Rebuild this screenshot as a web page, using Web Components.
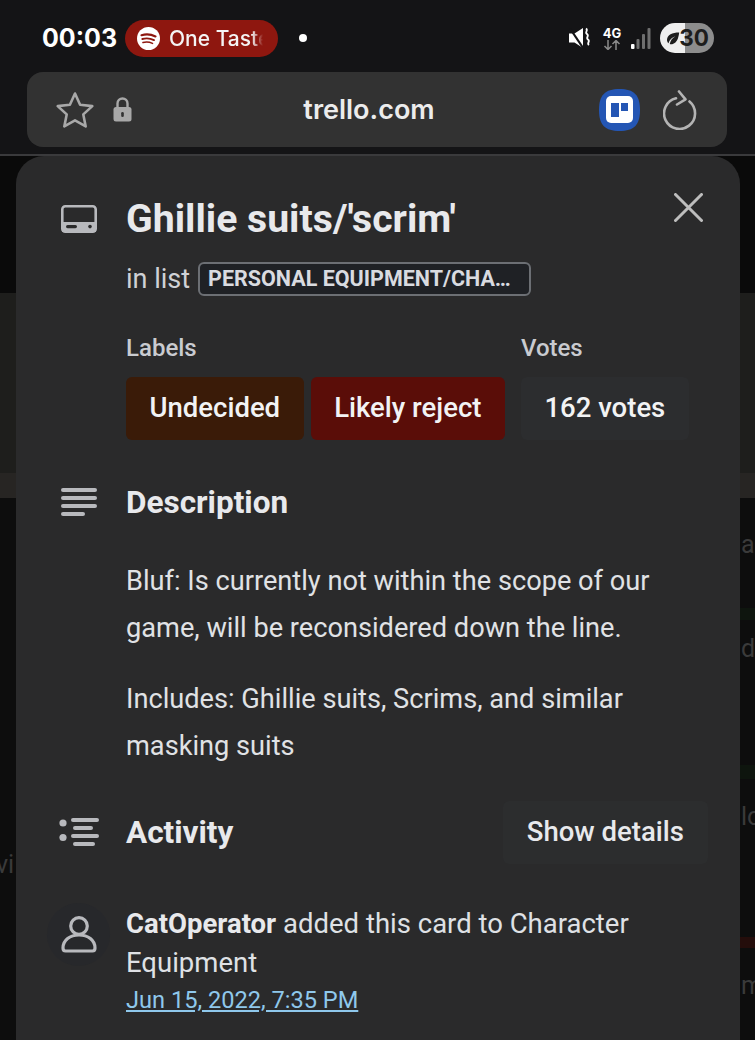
<!DOCTYPE html>
<html>
<head>
<meta charset="utf-8">
<title>Trello card</title>
<style>
    html, body { margin: 0; height: 100%; background: #0b0b0b; }
    body { width: 755px; height: 1040px; overflow: hidden; font-family: Roboto, "Liberation Sans", sans-serif; }
</style>
</head>
<body>
<phone-chrome></phone-chrome>
<page-backdrop>
    <card-modal></card-modal>
</page-backdrop>

<script>
class PhoneChrome extends HTMLElement {
    constructor() {
        super();
        this.attachShadow({ mode: 'open' });
        this.shadowRoot.innerHTML = `
            <style>
                :host { display: block; height: 156px; background: #141416; box-sizing: border-box; border-bottom: 2px solid #3a3a3c; font-family: Inter, Roboto, sans-serif; }
                .status { height: 72px; box-sizing: border-box; padding: 19px 41px 0 42px; display: flex; align-items: flex-start; }
                .time { color: #fff; font-size: 25px; font-weight: 700; line-height: 38px; width: 83px; }
                .pill { width: 153px; height: 37px; margin-top: 1px; background: #8e170f; border-radius: 19px; display: flex; align-items: center; box-sizing: border-box; padding-left: 12px; gap: 9px; color: #f4f4f4; font-size: 21px; font-weight: 500; overflow: hidden; }
                .pill span { width: 94px; overflow: hidden; white-space: nowrap; -webkit-mask-image: linear-gradient(90deg,#000 88%,transparent); mask-image: linear-gradient(90deg,#000 88%,transparent); }
                .dot { width: 8px; height: 8px; border-radius: 50%; background: #fff; margin: 15px 0 0 21px; }
                .right { margin-left: auto; display: flex; align-items: center; height: 38px; }
                .net { width: 20px; margin-left: 11px; color: #fff; font-size: 13px; font-weight: 700; line-height: 13px; text-align: center; }
                .net svg { display: block; margin: 0 auto; }
                .bars { margin-left: 9px; }
                .batt { margin-left: 9px; width: 54px; height: 30px; border-radius: 15px; background: linear-gradient(90deg, #efefef 0 47%, #8d8d8d 47%); position: relative; color: #1d1d1d; font-size: 22.500px; font-weight: 700; line-height: 30px; text-align: right; padding-right: 5px; box-sizing: border-box; }
                .batt svg { position: absolute; left: 5px; top: 8px; }
                .bar { margin: 0 28px 0 27px; height: 75px; background: #323232; border-radius: 16px; display: flex; align-items: center; box-sizing: border-box; padding: 0 30px 0 28px; position: relative; }
                .bar .url { position: absolute; left: 0; right: 16px; text-align: center; color: #ececec; font-size: 27px; font-weight: 600; }
                .lock { margin-left: 18px; }
                .end { margin-left: auto; display: flex; align-items: center; gap: 23px; position: relative; }
            </style>
            <div class="status">
                <div class="time">00:03</div>
                <div class="pill">
                    <svg width="23" height="23" viewBox="0 0 23 23"><circle cx="11.500" cy="11.500" r="11.500" fill="#fff"/><g fill="none" stroke="#8e170f" stroke-linecap="round"><path d="M4.500 8.200c4.600-1.300 9.600-.9 14 1.200" stroke-width="2.200"/><path d="M5.300 12c3.900-1 8-.7 11.700 1.100" stroke-width="1.900"/><path d="M6 15.500c3.200-.8 6.500-.5 9.500.9" stroke-width="1.600"/></g></svg>
                    <span>One Taste</span>
                </div>
                <div class="dot"></div>
                <div class="right">
                    <svg width="22" height="22" viewBox="0 0 22 22"><path d="M0 6.500h5.500L14 1v20l-8.500-5.500H0z" fill="#fff"/><path d="M1 1.500l13.500 20" stroke="#141416" stroke-width="2.200"/><path d="M17 1.500c2.800 2-1.800 3.600 1 5.500s-1.800 3.600 1 5.500-1.800 3.600 1 5.500" fill="none" stroke="#fff" stroke-width="1.800"/></svg>
                    <div class="net">4G
                        <svg width="18" height="10" viewBox="0 0 18 10"><path d="M5 0v9M1.500 6L5 9.500 8.500 6M13 10V1M9.500 4L13 .5 16.500 4" fill="none" stroke="#8a8a8a" stroke-width="1.500"/></svg>
                    </div>
                    <svg class="bars" width="20" height="21" viewBox="0 0 20 21"><rect x="0" y="16" width="3.500" height="5" rx="1" fill="#fff"/><rect x="5.500" y="11" width="3" height="10" rx="1" fill="#6e6e6e"/><rect x="11" y="6" width="3" height="15" rx="1" fill="#6e6e6e"/><rect x="16.500" y="0" width="3" height="21" rx="1" fill="#6e6e6e"/></svg>
                    <div class="batt">
                        <svg width="15" height="15" viewBox="0 0 19 19"><path d="M18 2C9 2 3 5 2.500 11c0 2 .8 3.500 2 4.500C6 10 10 8 13 7c-3.500 2-6 4.500-7 9.500 1 .5 2.500.5 4 0 5-1.500 7-7 8-14.500z" fill="#1d1d1d"/></svg>
                        30
                    </div>
                </div>
            </div>
            <div class="bar">
                <svg width="40" height="38" viewBox="0 0 40 38"><path d="M20 2.500l5.100 11.200 12.200 1.400-9 8.300 2.400 12-10.700-6-10.700 6 2.400-12-9-8.300 12.200-1.400z" fill="none" stroke="#a8a8a8" stroke-width="2.600" stroke-linejoin="round"/></svg>
                <svg class="lock" width="19" height="25" viewBox="0 0 19 25"><path d="M4.500 11V6.500a5 5 0 0 1 10 0V11" fill="none" stroke="#a8a8a8" stroke-width="2.400"/><rect x="0.500" y="10" width="18" height="14.500" rx="2.500" fill="#a8a8a8"/><rect x="8.200" y="15" width="2.600" height="5" rx="1.300" fill="#323232"/></svg>
                <div class="url">trello.com</div>
                <div class="end">
                    <svg width="41" height="42" viewBox="0 0 41 42"><path d="M20.500 0C35 0 41 6 41 21S35 42 20.500 42 0 36 0 21 6 0 20.500 0z" fill="#2456b4"/><rect x="7" y="7" width="27" height="27" rx="5" fill="#fff"/><rect x="12" y="14" width="8" height="14" fill="#2456b4"/><rect x="22" y="14" width="7" height="8" fill="#2456b4"/></svg>
                    <svg width="34" height="40" viewBox="0 0 34 40" fill="none" stroke="#b4b4b4" stroke-width="2.600" stroke-linecap="round" stroke-linejoin="round"><path d="M13 8.300A15.500 15.500 0 1 0 26.500 11.500"/><path d="M16 1.500l6.500 7.800-8.500 5.200"/></svg>
                </div>
            </div>
        `;
    }
}

// Dimmed Trello board behind the modal, only its edges show
class PageBackdrop extends HTMLElement {
    constructor() {
        super();
        this.attachShadow({ mode: 'open' });
        this.shadowRoot.innerHTML = `
            <style>
                :host { display: block; position: relative; height: 884px; overflow: hidden; padding: 0 15px 0 16px; background: linear-gradient(180deg, #0a0a0a 0 137px, #1e1e1c 137px 317px, #272523 317px 342px, #0d0d0d 342px); color: #3a3a3a; font-size: 25px; }
                span { position: absolute; }
                i { position: absolute; left: 740px; width: 15px; }
            </style>
            <i style="top:452px;height:12px;background:#0e150e"></i>
            <i style="top:609px;height:14px;background:#0e150e"></i>
            <i style="top:781px;height:11px;background:#240d0b"></i>
            <span style="left:-4px;top:694px">vi</span>
            <span style="left:741px;top:374px">a</span>
            <span style="left:741px;top:478px">d</span>
            <span style="left:741px;top:646px">lo</span>
            <span style="left:741px;top:815px">m</span>
            <slot></slot>
        `;
    }
}

class CardSection extends HTMLElement {
    static get observedAttributes() {
        return ['heading'];
    }

    constructor() {
        super();
        this.attachShadow({ mode: 'open' });
        this.shadowRoot.innerHTML = `
            <style>
                :host { display: grid; grid-template-columns: 110px 1fr; }
                .icon { display: flex; justify-content: flex-start; padding-left: 45px; align-items: center; height: 40px; }
                .head { display: flex; align-items: center; justify-content: space-between; height: 40px; color: #e8e9ec; font-size: var(--head-size, 31.500px); font-weight: 700; }
                .body { grid-column: 2; }
            </style>
            <div class="icon"><slot name="icon"></slot></div>
            <div class="head"><span id="heading"></span><slot name="action"></slot></div>
            <div class="body"><slot></slot></div>
        `;
    }

    attributeChangedCallback() {
        this.shadowRoot.getElementById('heading').textContent = this.getAttribute('heading');
    }
}

class LabelChip extends HTMLElement {
    constructor() {
        super();
        this.attachShadow({ mode: 'open' });
        this.shadowRoot.innerHTML = `
            <style>
                :host { display: block; height: 63px; line-height: 62px; padding: 0 23.500px; border-radius: 6px; background: var(--chip, #2c2d2f); color: #f2f3f4; font-size: 27.500px; font-weight: 500; white-space: nowrap; }
            </style>
            <slot></slot>
        `;
    }
}

class CardModal extends HTMLElement {
    constructor() {
        super();
        this.attachShadow({ mode: 'open' });
        this.shadowRoot.innerHTML = `
            <style>
                :host { display: block; position: relative; height: 900px; background: #2a2a2b; border-radius: 28px 28px 0 0; box-sizing: border-box; padding-top: 43px; color: #dfe1e5; }
                .close { position: absolute; left: 658px; top: 37px; }
                .sub { display: flex; align-items: center; height: 34px; margin-top: 23px; font-size: 27px; font-weight: 400; color: #cfd1d5; gap: 8px; }
                .list { width: 333px; height: 34px; box-sizing: border-box; border: 2px solid #6c6f74; border-radius: 6px; background: #1f2125; color: #d9dbe0; font-size: 21.500px; font-weight: 700; line-height: 30px; padding-left: 8px; white-space: nowrap; }
                .meta { display: flex; margin-top: 36px; gap: 6px; }
                .meta h3 { margin: 0 0 13px; height: 32px; line-height: 32px; font-size: 24px; font-weight: 500; color: #c9cbd0; }
                .chips { display: flex; gap: 7px; }
                .votes { margin-left: 10px; }
                .desc { margin-top: 42px; }
                p { margin: 0; font-size: 27.200px; line-height: 47px; color: #e0e2e5; }
                p + p { margin-top: 24px; }
                .text { padding-top: 36px; padding-right: 50px; }
                .activity { margin-top: 42px; }
                .details { height: 63px; line-height: 62px; padding: 0 24px; margin-right: 32px; background: #2c2d2e; border-radius: 6px; color: #e8e9ec; font-size: 27.500px; font-weight: 500; }
                .entry { display: grid; grid-template-columns: 63px 1fr; column-gap: 16px; margin: 52px 48px 0 31px; }
                .avatar { width: 63px; height: 63px; border-radius: 50%; background: #27282b; display: flex; align-items: center; justify-content: center; margin-top: -1px; }
                .msg { font-size: 27.500px; line-height: 39px; color: #dfe1e5; }
                .msg b { font-weight: 700; color: #e8e9ec; }
                .msg a { display: block; color: #8fc8ec; font-size: 23.600px; line-height: 36px; text-decoration: underline; }
            </style>
            <svg class="close" width="29" height="29" viewBox="0 0 29 29"><path d="M1.500 1.500l26 26M27.500 1.500l-26 26" stroke="#bdbdbd" stroke-width="3" stroke-linecap="round"/></svg>

            <card-section heading="Ghillie suits/'scrim'" style="--head-size:39.200px">
                <svg slot="icon" width="36" height="28" viewBox="0 0 36 28"><rect x="1.300" y="1.300" width="33.400" height="25.400" rx="3" fill="none" stroke="#b8b9bd" stroke-width="2.600"/><rect x="1" y="17" width="34" height="10" fill="#b8b9bd"/><rect x="5" y="20" width="11" height="3.200" rx="1.600" fill="#2a2a2b"/><circle cx="29" cy="21.600" r="1.800" fill="#2a2a2b"/></svg>
                <div class="sub">in list <div class="list">PERSONAL EQUIPMENT/CHA…</div></div>
                <div class="meta">
                    <div>
                        <h3>Labels</h3>
                        <div class="chips">
                            <label-chip style="--chip:#3a1b08">Undecided</label-chip>
                            <label-chip style="--chip:#5a0d08">Likely reject</label-chip>
                        </div>
                    </div>
                    <div class="votes">
                        <h3>Votes</h3>
                        <label-chip>162 votes</label-chip>
                    </div>
                </div>
            </card-section>

            <card-section heading="Description" class="desc">
                <svg slot="icon" width="36" height="28" viewBox="0 0 36 28" fill="#b8b9bd"><rect y="0" width="36" height="4" rx="2"/><rect y="8" width="36" height="4" rx="2"/><rect y="16" width="36" height="4" rx="2"/><rect y="24" width="24" height="4" rx="2"/></svg>
                <div class="text">
                    <p>Bluf: Is currently not within the scope of our game, will be reconsidered down the line.</p>
                    <p>Includes: Ghillie suits, Scrims, and similar masking suits</p>
                </div>
            </card-section>

            <card-section heading="Activity" class="activity">
                <svg slot="icon" width="40" height="28" viewBox="0 0 40 28" fill="#b8b9bd" style="margin-left:-2px"><circle cx="4" cy="5" r="3.600"/><circle cx="4" cy="19.500" r="3.600"/><rect x="12" y="0" width="28" height="4" rx="2"/><rect x="14" y="8" width="20" height="4" rx="2"/><rect x="12" y="16" width="28" height="4" rx="2"/><rect x="14" y="24" width="22" height="4" rx="2"/></svg>
                <div slot="action" class="details">Show details</div>
            </card-section>

            <div class="entry">
                <div class="avatar">
                    <svg width="36" height="37" viewBox="0 0 36 37"><circle cx="18" cy="10" r="8.300" fill="none" stroke="#b8b9bd" stroke-width="3.200"/><path d="M2 32c0-8 7-13 16-13s16 5 16 13c0 2-1 3-2.500 3h-27C3 35 2 34 2 32z" fill="none" stroke="#b8b9bd" stroke-width="3.200"/></svg>
                </div>
                <div class="msg">
                    <b>CatOperator</b> added this card to Character Equipment
                    <a>Jun 15, 2022, 7:35 PM</a>
                </div>
            </div>
        `;
    }
}

customElements.define('phone-chrome', PhoneChrome);
customElements.define('page-backdrop', PageBackdrop);
customElements.define('card-section', CardSection);
customElements.define('label-chip', LabelChip);
customElements.define('card-modal', CardModal);
</script>
</body>
</html>
